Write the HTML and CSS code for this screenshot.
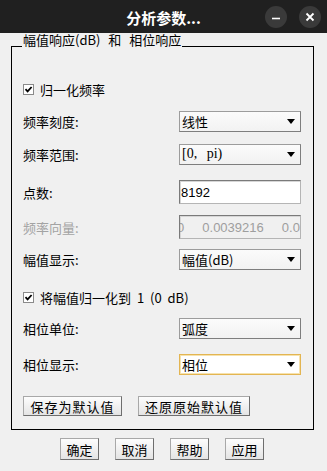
FILE: index.html
```html
<!DOCTYPE html>
<html lang="zh">
<head>
<meta charset="utf-8">
<title>分析参数...</title>
<link rel="stylesheet" href="styles.css">
</head>
<body>
<div class="window">
  <div class="titlebar">
    <span></span>
    <span class="title">分析参数...</span>
    <div class="controls">
      <span class="ctl"><svg width="22" height="22" viewBox="0 0 22 22"><line x1="7" y1="12.5" x2="15" y2="12.5" stroke="#fff" stroke-width="1.6"/></svg></span>
      <span class="ctl"><svg width="22" height="22" viewBox="0 0 22 22"><path d="M7.5 7.5 L14.5 14.5 M14.5 7.5 L7.5 14.5" stroke="#fff" stroke-width="1.8"/></svg></span>
    </div>
  </div>
  <div class="content">
    <fieldset class="group">
      <legend>幅值响应(dB) 和 相位响应</legend>
      <div class="check-row r1">
        <span class="checkbox"><svg width="9" height="9" viewBox="0 0 9 9"><path d="M1.5 4.2 L3.6 6.4 L7.6 2" fill="none" stroke="#000" stroke-width="1.8"/></svg></span>
        <span>归一化频率</span>
      </div>
      <div class="row r2">
        <span class="label">频率刻度:</span>
        <div class="select"><span>线性</span><span class="arrow"></span></div>
      </div>
      <div class="row r3">
        <span class="label">频率范围:</span>
        <div class="select"><span class="mono">[0, pi)</span><span class="arrow"></span></div>
      </div>
      <div class="row r4">
        <span class="label">点数:</span>
        <div class="input">8192</div>
      </div>
      <div class="row r5">
        <span class="label disabled">频率向量:</span>
        <div class="input off"><span>0&nbsp;&nbsp;&nbsp;&nbsp;&nbsp;0.0039216&nbsp;&nbsp;&nbsp;&nbsp;&nbsp;0.0</span></div>
      </div>
      <div class="row r6">
        <span class="label">幅值显示:</span>
        <div class="select"><span>幅值(dB)</span><span class="arrow"></span></div>
      </div>
      <div class="check-row r7">
        <span class="checkbox"><svg width="9" height="9" viewBox="0 0 9 9"><path d="M1.5 4.2 L3.6 6.4 L7.6 2" fill="none" stroke="#000" stroke-width="1.8"/></svg></span>
        <span class="spaced">将幅值归一化到 1 (0 dB)</span>
      </div>
      <div class="row r8">
        <span class="label">相位单位:</span>
        <div class="select"><span>弧度</span><span class="arrow"></span></div>
      </div>
      <div class="row r9">
        <span class="label">相位显示:</span>
        <div class="select focus"><span>相位</span><span class="arrow"></span></div>
      </div>
      <div class="btn-row">
        <button class="btn w-save">保存为默认值</button>
        <button class="btn w-restore">还原原始默认值</button>
      </div>
    </fieldset>
    <div class="footer">
      <button class="btn small">确定</button>
      <button class="btn small">取消</button>
      <button class="btn small">帮助</button>
      <button class="btn small">应用</button>
    </div>
  </div>
</div>
</body>
</html>
```
FILE: styles.css
```css
* { box-sizing: border-box; }
html, body { margin: 0; padding: 0; }
body {
  width: 327px;
  height: 471px;
  overflow: hidden;
  background: #f0f0f0;
  font-family: "Noto Sans CJK SC", "Noto Sans", sans-serif;
  font-size: 13px;
  color: #000;
}
.window { width: 327px; height: 471px; display: flex; flex-direction: column; }

.titlebar {
  height: 33px;
  background: #202020;
  display: grid;
  grid-template-columns: 1fr auto 1fr;
  align-items: center;
}
.title {
  color: #fff;
  font-weight: bold;
  font-size: 15px;
  line-height: 1;
  padding-top: 2px;
}
.controls {
  justify-self: end;
  display: flex;
  gap: 12px;
  padding-right: 6px;
}
.ctl {
  width: 22px; height: 22px;
  border-radius: 50%;
  background: #3a3a3a;
  display: flex;
}

.content { flex: 1; }

.group {
  margin: 0 13px 0 11px;
  border: 1px solid #000;
  padding: 0 12px 0 11px;
  min-width: 0;
}
.group legend {
  padding: 0 1px 13px;
  margin-left: -1px;
  line-height: 14px;
  font-size: 13px;
  word-spacing: 5px;
}

.row {
  display: grid;
  grid-template-columns: 1fr 122px;
  align-items: center;
  height: 24px;
}
.check-row {
  display: flex;
  align-items: center;
  gap: 6px;
  height: 24px;
}
.spaced { word-spacing: 3px; }
.r1 { margin-top: 17px; }
.r2 { margin-top: 8px; }
.r3 { margin-top: 9px; }
.r4 { margin-top: 14px; }
.r5 { margin-top: 11px; }
.r6 { margin-top: 8px; }
.r7 { margin-top: 14px; }
.r8 { margin-top: 7px; }
.r9 { margin-top: 12px; }

.label { line-height: 1; }
.disabled { color: #a3a3a3; }

.checkbox {
  width: 11px; height: 11px;
  border: 1px solid #8a8a8a;
  background: #fff;
  display: flex;
  align-items: center;
  justify-content: center;
}

.select {
  height: 21px;
  border: 1px solid #9c9c9c;
  border-right-color: #7e7e7e;
  border-bottom-color: #7e7e7e;
  background: linear-gradient(#fbfbfb, #f2f2f2);
  display: flex;
  align-items: center;
  justify-content: space-between;
  padding: 0 5px 0 2px;
  line-height: 1;
}
.select.focus {
  border: 1px solid #e3b552;
  box-shadow: inset 0 0 0 1px #f6e2ad;
  background: #fff;
}
.arrow {
  width: 0; height: 0;
  border-left: 4px solid transparent;
  border-right: 4px solid transparent;
  border-top: 5px solid #000;
  margin-top: 1px;
}
.mono { font-family: "Liberation Serif", serif; font-size: 14px; word-spacing: 6px; }

.input {
  height: 24px;
  border: 1px solid #7a7a7a;
  border-right-color: #b5b5b5;
  border-bottom-color: #b5b5b5;
  box-shadow: inset 1px 1px 0 #d6d6d6;
  background: #fff;
  display: flex;
  align-items: center;
  padding-left: 1px;
  font-family: "Liberation Sans", sans-serif;
  font-size: 13px;
  overflow: hidden;
  white-space: nowrap;
}
.input.off {
  background: #f0f0f0;
  color: #9e9e9e;
  padding-left: 0;
}
.input.off span { margin-left: -3px; }

.btn-row {
  display: flex;
  gap: 16px;
  margin-top: 20px;
  margin-bottom: 13px;
}
.btn {
  font-family: inherit;
  font-size: 13px;
  color: #000;
  height: 20px;
  padding: 0;
  border: 1px solid #a8a8a8;
  border-right-color: #6e6e6e;
  border-bottom-color: #6e6e6e;
  background: linear-gradient(#fdfdfd, #e4e4e4);
  line-height: 1;
  letter-spacing: 1px;
}
.w-save { width: 99px; }
.w-restore { width: 112px; }

.footer {
  display: flex;
  justify-content: center;
  gap: 16px;
  margin-top: 8px;
  padding-right: 3px;
}
.btn.small { width: 39px; height: 22px; letter-spacing: 0; }
```
